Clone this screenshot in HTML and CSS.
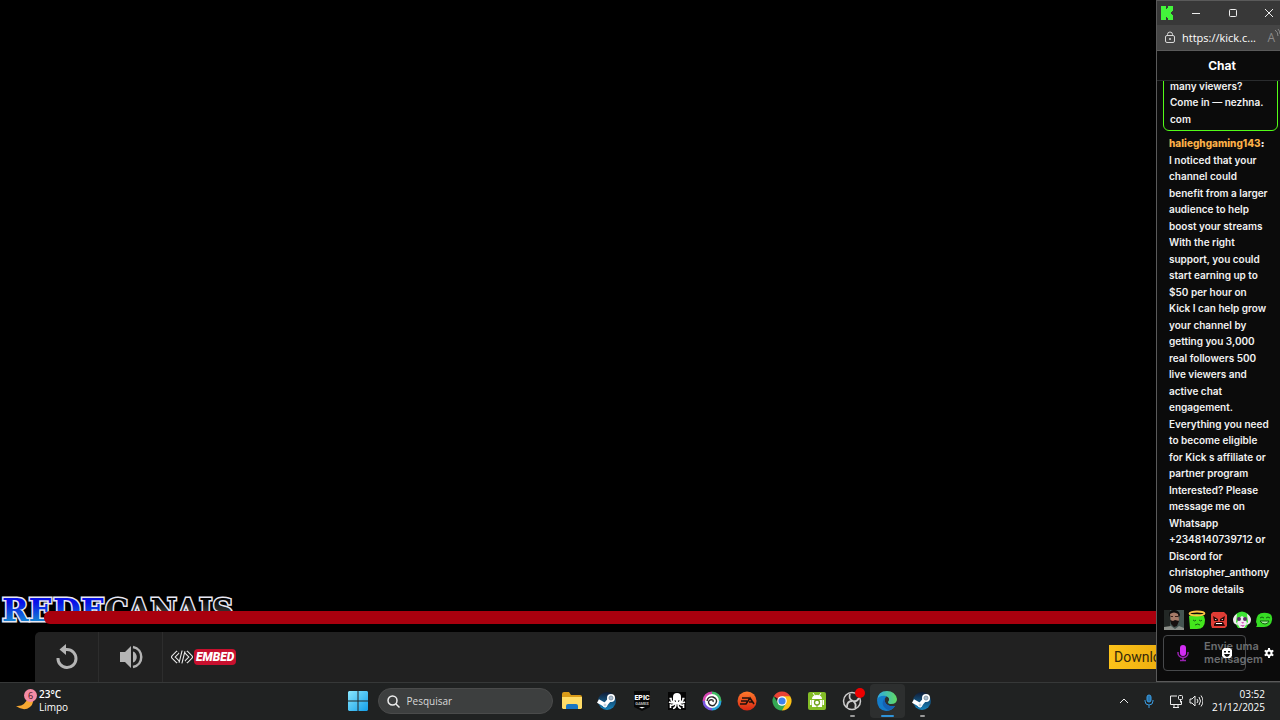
FILE: index.html
```html
<!DOCTYPE html>
<html lang="pt-br">

<head>
    <meta charset="UTF-8">
    <meta name="viewport" content="width=device-width, initial-scale=1.0">
    <title>Rede Canais</title>
    <link rel="stylesheet" href="styles.css">
</head>

<body>
    <div class="desktop">
        <!-- Player -->
        <main class="player">
            <div class="video"></div>
            <div class="seek-row">
                <svg class="logo" width="236" height="32" role="img" aria-label="REDECANAIS">
                    <defs>
                        <linearGradient id="azul" x1="0" y1="0" x2="0" y2="1">
                            <stop offset="0.3" stop-color="#0710e8" />
                            <stop offset="0.85" stop-color="#1590d0" />
                        </linearGradient>
                        <linearGradient id="cinza" x1="0" y1="0" x2="0" y2="1">
                            <stop offset="0.2" stop-color="#000000" />
                            <stop offset="0.8" stop-color="#5a5a5a" />
                        </linearGradient>
                    </defs>
                    <text class="logo-text" x="2" y="27"><tspan class="logo-rede" fill="url(#azul)">REDE</tspan><tspan fill="url(#cinza)">CANAIS</tspan></text>
                </svg>
                <input class="seek" type="range" min="0" max="100" value="0" aria-label="Progresso">
            </div>
            <div class="controls">
                <button class="control" aria-label="Reiniciar">
                    <svg width="24" height="26" viewBox="0 0 24 26" fill="none" stroke="#b4b4b4" stroke-width="3">
                        <path d="M3 14a9 9 0 1 0 9-8.500H9" />
                        <path d="M11 0v11L4.500 5.500z" fill="#b4b4b4" stroke="none" />
                    </svg>
                </button>
                <button class="control" aria-label="Volume">
                    <svg width="24" height="24" viewBox="0 0 24 24" fill="#b4b4b4">
                        <path d="M1 7h5l6-6v22l-6-6H1z" />
                        <path d="M14 6.500c5 1.500 5 9.500 0 11z" />
                        <path d="M14 2c11 2 11 18 0 20" fill="none" stroke="#b4b4b4" stroke-width="2.500" />
                    </svg>
                </button>
                <button class="embed">
                    <svg width="22" height="16" viewBox="0 0 22 16" fill="none" stroke-linejoin="round">
                        <path d="M7 3L2 8l5 5M15 3l5 5-5 5M12.500 2l-3 12" stroke="#e8e8e8" stroke-width="4" />
                        <path d="M7 3L2 8l5 5M15 3l5 5-5 5M12.500 2l-3 12" stroke="#191919" stroke-width="1.800" />
                    </svg>
                    <span class="embed-label">EMBED</span>
                </button>
                <a class="download" href="#">Download</a>
            </div>
        </main>

        <!-- Janela do chat -->
        <aside class="chat-window">
            <div class="titlebar">
                <svg width="12" height="14" viewBox="0 0 12 14" fill="#43f53b">
                    <path d="M0 0h5v3h1V2h1V0h5v5h-1v1h-1v2h1v1h1v5H7v-2H6v-1H5v3H0z" />
                </svg>
                <button aria-label="Minimizar"><svg width="10" height="10" stroke="#eee"><path d="M1 5.500h8" /></svg></button>
                <button aria-label="Maximizar"><svg width="10" height="10" fill="none" stroke="#eee"><rect x="1.500" y="1.500" width="7" height="7" rx="1" /></svg></button>
                <button aria-label="Fechar"><svg width="10" height="10" stroke="#eee"><path d="M1 1l8 8M9 1L1 9" /></svg></button>
            </div>
            <div class="addressbar">
                <svg width="12" height="13" viewBox="0 0 12 13" fill="none" stroke="#d8d8d8">
                    <rect x="1.500" y="4.500" width="9" height="7" rx="1.500" />
                    <path d="M3.500 4.500V3.500a2.500 2.500 0 0 1 5 0v1" />
                    <circle cx="6" cy="8" r="0.600" fill="#d8d8d8" />
                </svg>
                <span class="url">https://kick.c...</span>
                <button class="read-aloud" aria-label="Ler em voz alta">A
                    <svg width="5" height="8" fill="none" stroke="#8a8a8a"><path d="M0 1q3 2 3 6M3 0q2 2 2 5" /></svg>
                </button>
            </div>
            <h1 class="chat-title">Chat</h1>
            <div class="messages">
                <p class="pinned">many viewers?<br>Come in — nezhna.<br>com</p>
                <p class="message"><a class="user" href="#">halieghgaming143</a><b>:</b><br>
                    I noticed that your channel could benefit from a larger audience to help boost your streams<br>
                    With the right support, you could start earning up to $50 per hour on<br>
                    Kick I can help grow your channel by<br>
                    getting you 3,000 real followers 500 live viewers and active chat engagement.<br>
                    Everything you need to become eligible for Kick s affiliate or partner program<br>
                    Interested? Please message me on Whatsapp<br>
                    +2348140739712 or Discord for christopher_anthony<wbr>06 more details</p>
            </div>
            <div class="emotes">
                <button aria-label="Emote barba">
                    <svg width="20" height="20" viewBox="0 0 20 20">
                        <path fill="#455552" d="M0 0h20v20H0z" />
                        <path fill="#222725" d="M0 0h6v20H0z" />
                        <path fill="#0d0d0d" d="M5 5q0-5 5-5t6 5l-1 2H6z" />
                        <path fill="#a67b68" d="M6 4q4-3 8 0l1 6-4 5-4-4z" />
                        <path fill="#16100f" d="M6 10l3 1 2-1 4 1-2 5-3 1-3-3z" />
                        <path stroke="#382019" d="M7 6.500h2M11 6.500h3" />
                        <path fill="#8d918b" d="M0 17l7-1 4 3 4-3 5 2v2H0z" />
                    </svg>
                </button>
                <button aria-label="Emote anjo">
                    <svg width="20" height="20" viewBox="0 0 20 20">
                        <path fill="#43e51c" d="M2 6q8-4 15 0l1 4q0 9-8 9H3z" />
                        <ellipse cx="10" cy="3.500" rx="7.500" ry="2" fill="none" stroke="#ffc545" stroke-width="1.800" />
                        <path fill="none" stroke="#146410" d="M6 10q2 2 3 0M12 10q2 2 3 0M8 15q3-2 5 0" />
                    </svg>
                </button>
                <button aria-label="Emote bravo">
                    <svg width="20" height="20" viewBox="0 0 20 20">
                        <path fill="#df3c35" d="M4 2h11l3 3v11l-2 2H3l-1-3V4z" />
                        <path fill="#2b0808" d="M4 6l5 3v2H5zM16 6l-5 3v2h4zM5 14l2-2h7l2 4H5z" />
                        <path fill="#fff" d="M6 9l2 1H6zM14 9l-2 1h2zM7 13h6v1H7z" />
                    </svg>
                </button>
                <button aria-label="Emote cachorro">
                    <svg width="20" height="20" viewBox="0 0 20 20">
                        <path fill="#3ee336" d="M4 4q6-5 12 0l2 7-4 7H6l-4-7z" />
                        <path fill="#f2e9f2" d="M1 9q1-4 4-5l-1 8 2 3-3-1q-2-1-2-5zM19 9q-1-4-4-5l1 8-2 3 3-1q2-1 2-5zM7 8l3-2 3 2 2 5-3 5H8l-3-5z" />
                        <circle cx="7" cy="9" r="2" fill="#5b2b69" /><circle cx="13" cy="9" r="2" fill="#5b2b69" />
                        <path fill="#d45aba" d="M9 12h3l-1 2zM8 15h5l-2 2z" />
                    </svg>
                </button>
                <button aria-label="Emote feliz">
                    <svg width="20" height="20" viewBox="0 0 20 20">
                        <path fill="#36dc24" d="M4 5q3-3 9-2 6 1 5 7-1 7-8 7H2q2-2 0-5 0-4 2-7z" />
                        <path fill="none" stroke="#12600e" d="M6 8q2-2 4 0M12 8q2-2 4 0" />
                        <path fill="#a5f09d" stroke="#12600e" d="M6 11h9q-1 3-4 3t-5-3z" />
                    </svg>
                </button>
            </div>
            <div class="composer">
                <div class="message-box">
                    <svg class="mic" width="12" height="18" viewBox="0 0 12 18">
                        <rect x="3" y="1" width="6" height="11" rx="3" fill="#d12cf2" />
                        <path d="M1 8v1a5 4.500 0 0 0 10 0V8M6 13v4M3 16.500h6" fill="none" stroke="#9822b0" stroke-width="1.500" />
                    </svg>
                    <textarea rows="2" aria-label="Mensagem" placeholder="Envie uma mensagem"></textarea>
                    <button class="smiley" aria-label="Emotes">
                        <svg width="12" height="12" viewBox="0 0 12 12">
                            <path fill="#fff" d="M3 1h6l2 2v6l-2 2H3L1 9V3z" />
                            <path fill="#111" d="M3 4h2v1.500H3zM7 4h2v1.500H7zM3 7h6q-1 3-3 3T3 7z" />
                        </svg>
                    </button>
                </div>
                <button class="settings" aria-label="Configurações">
                    <svg width="10" height="10" viewBox="0 0 10 10">
                        <circle cx="5" cy="5" r="2.500" fill="none" stroke="#fff" stroke-width="2" />
                        <path d="M5 0v2M5 8v2M0.700 2.500l1.700 1M7.600 6.500l1.700 1M9.300 2.500l-1.700 1M2.400 6.500l-1.700 1" stroke="#fff" stroke-width="2" />
                    </svg>
                </button>
            </div>
        </aside>
    </div>

    <!-- Barra de tarefas -->
    <footer class="taskbar">
        <button class="weather">
            <svg width="24" height="26" viewBox="0 0 24 26">
                <path d="M17 8q3 7-2 11-6 5-14-1 9 1 12-9z" fill="#f7a832" />
                <circle cx="15.500" cy="7.500" r="6.500" fill="#f58ba6" />
                <text class="badge" x="15.500" y="11" text-anchor="middle">6</text>
            </svg>
            <span><b>23°C</b><br>Limpo</span>
        </button>
        <nav class="apps">
            <button class="app" aria-label="Iniciar">
                <svg width="20" height="20" viewBox="0 0 20 20">
                    <defs><linearGradient id="win" x1="0" y1="0" x2="1" y2="1"><stop stop-color="#8ae8ff" /><stop offset="1" stop-color="#129ee8" /></linearGradient></defs>
                    <path fill="url(#win)" d="M1 0h8.500v9.500H0V1zM10.500 0H19l1 1v8.500h-9.500zM0 10.500h9.500V20H1l-1-1zM10.500 10.500H20V19l-1 1h-8.500z" />
                </svg>
            </button>
            <label class="search">
                <svg width="13" height="13" viewBox="0 0 13 13" fill="none" stroke="#eee" stroke-width="1.500"><circle cx="5.500" cy="5.500" r="4.500" /><path d="M9 9l3.500 3.500" /></svg>
                <input type="text" placeholder="Pesquisar" aria-label="Pesquisar">
            </label>
            <button class="app" aria-label="Explorador de Arquivos">
                <svg width="20" height="20" viewBox="0 0 20 20">
                    <path fill="#d99b18" d="M0 3q0-2 2-2h5l2 3h9q2 0 2 2v5H0z" />
                    <path fill="#ffdc67" d="M0 6h20v11l-1 1H1l-1-1z" />
                    <path fill="#1976c4" d="M4 18v-3q0-2 2-2h8q2 0 2 2v3z" />
                </svg>
            </button>
            <button class="app" aria-label="Steam">
                <svg width="20" height="20" viewBox="0 0 20 20">
                    <defs><linearGradient id="steam" x1="0" y1="0" x2="0" y2="1"><stop stop-color="#101b35" /><stop offset="1" stop-color="#1784bd" /></linearGradient></defs>
                    <circle cx="10" cy="10" r="9" fill="url(#steam)" />
                    <path d="M1 10l7 4 6-7" fill="none" stroke="#fff" stroke-width="4" />
                    <circle cx="14" cy="7" r="4" fill="#fff" /><circle cx="14" cy="7" r="2" fill="#a9bed0" stroke="#8496a6" />
                    <circle cx="8" cy="14" r="2" fill="#c4d2dd" stroke="#fff" />
                </svg>
            </button>
            <button class="app" aria-label="Epic Games">
                <svg width="18" height="20" viewBox="0 0 18 20">
                    <path fill="#080808" d="M1 0h16v16l-8 4-8-4z" />
                    <text class="epic" x="9" y="9" text-anchor="middle">EPIC</text>
                    <text class="epic-small" x="9" y="14" text-anchor="middle">GAMES</text>
                    <path d="M6 16l3 1.500 3-1.500" fill="#fff" />
                </svg>
            </button>
            <button class="app" aria-label="Polvo">
                <svg width="18" height="18" viewBox="0 0 18 18">
                    <path fill="#050505" d="M0 0h18v18H0z" />
                    <path fill="#fff" d="M5 5q0-4 4-4t4 4v4l-1 3H6L5 9z" />
                    <path d="M6 10Q3 10 3 6.500H1.500M6 11Q3 11 1 10M7 11.500Q5 14 2.500 13v3M8 12q0 4-3 4.500M12 10q3 0 3-3.500h1.500M12 11q3 0 5-1M11 11.500q2 2.500 4.500 1.500v3M10 12q0 4 3 4.500" fill="none" stroke="#fff" stroke-width="1.600" />
                    <path fill="#050505" d="M6.500 8l1.500.8v1H7zM11.500 8l-1.500.8v1h1z" />
                </svg>
            </button>
            <button class="app" aria-label="Ubisoft Connect">
                <svg width="20" height="20" viewBox="0 0 20 20">
                    <path d="M2 10a8 8 0 0 1 8-8" fill="none" stroke="#d946b4" stroke-width="3" />
                    <path d="M10 2a8 8 0 0 1 8 8" fill="none" stroke="#41b964" stroke-width="3" />
                    <path d="M18 10a8 8 0 0 1-8 8" fill="none" stroke="#27a4d7" stroke-width="3" />
                    <path d="M10 18a8 8 0 0 1-8-8" fill="none" stroke="#7755df" stroke-width="3" />
                    <circle cx="10" cy="10" r="7" fill="#fff" />
                    <path d="M5 10q1-5 6-4 5 2 3 6-2 4-6 2-3-3 0-5 4-1 3 2" fill="none" stroke="#292929" stroke-width="1.400" />
                </svg>
            </button>
            <button class="app" aria-label="EA">
                <svg width="20" height="20" viewBox="0 0 20 20">
                    <defs><linearGradient id="ea" x1="0" y1="0" x2="0" y2="1"><stop stop-color="#ff7a2c" /><stop offset="1" stop-color="#d82713" /></linearGradient></defs>
                    <circle cx="10" cy="10" r="9.500" fill="url(#ea)" />
                    <path d="M5 7h7M4 10h6M3 13h6l4-6 4 6M12 11h4" fill="none" stroke="#21100c" stroke-width="1.600" />
                </svg>
            </button>
            <button class="app" aria-label="Chrome">
                <svg width="20" height="20" viewBox="0 0 20 20">
                    <path fill="#e94335" d="M10 10L1.770 5.250A9.500 9.500 0 0 1 18.230 5.250z" />
                    <path fill="#fbc116" d="M10 10V5.250h8.230A9.500 9.500 0 0 1 10 19.500z" />
                    <path fill="#34a853" d="M10 10l4 2.400L10 19.500A9.500 9.500 0 0 1 1.770 5.250L6 12z" />
                    <circle cx="10" cy="10" r="4.800" fill="#fff" /><circle cx="10" cy="10" r="3.600" fill="#3d82ee" />
                </svg>
            </button>
            <button class="app" aria-label="Emulador Android">
                <svg width="20" height="20" viewBox="0 0 20 20">
                    <rect x="1" y="1" width="18" height="18" rx="2" fill="#83bd27" />
                    <path fill="#fff" d="M5 8q0-4 5-4t5 4zM5 9h10v7H5zM3 9h1.500v5H3zM15.500 9H17v5h-1.500z" />
                    <path d="M6 2l2 3M14 2l-2 3" stroke="#fff" />
                    <circle cx="10" cy="11.500" r="2.500" fill="none" stroke="#70a31d" stroke-width="1.300" /><path d="M10 14v3" stroke="#70a31d" />
                </svg>
            </button>
            <button class="app open" aria-label="OBS Studio">
                <svg width="20" height="20" viewBox="0 0 20 20">
                    <circle cx="10" cy="10" r="8.500" fill="#252525" stroke="#ccc" stroke-width="1.500" />
                    <path d="M8 3q-2 5 3 7 4 1 6-3M10 10q-5 0-5 6M11 10q4 3 2 7" fill="none" stroke="#ccc" stroke-width="1.800" />
                </svg>
                <span class="rec"></span>
            </button>
            <button class="app open active" aria-label="Microsoft Edge">
                <svg width="20" height="20" viewBox="0 0 20 20">
                    <defs><linearGradient id="edge"><stop stop-color="#2aa8ea" /><stop offset="1" stop-color="#62db63" /></linearGradient></defs>
                    <path fill="#147cca" d="M0 9q2-7 10-4-3 2-2 6 2 5 10 4-3 5-9 5Q0 19 0 9z" />
                    <path fill="url(#edge)" d="M0 9Q1 0 10 0q8 0 10 8 0 5-6 5-3 0-3-2 3-4-2-6-7-1-9 4z" />
                    <path fill="#1561b4" d="M8 7q-6 7 3 12 5 0 7-4-8 1-10-4z" />
                </svg>
            </button>
            <button class="app open" aria-label="Steam aberto">
                <svg width="20" height="20" viewBox="0 0 20 20">
                    <circle cx="10" cy="10" r="9" fill="url(#steam)" />
                    <path d="M1 10l7 4 6-7" fill="none" stroke="#fff" stroke-width="4" />
                    <circle cx="14" cy="7" r="4" fill="#fff" /><circle cx="14" cy="7" r="2" fill="#a9bed0" stroke="#8496a6" />
                    <circle cx="8" cy="14" r="2" fill="#c4d2dd" stroke="#fff" />
                </svg>
            </button>
        </nav>
        <div class="tray">
            <button aria-label="Ícones ocultos"><svg width="10" height="10" fill="none" stroke="#eee"><path d="M1 7l4-4 4 4" /></svg></button>
            <button aria-label="Microfone">
                <svg width="10" height="14" viewBox="0 0 10 14" fill="none" stroke="#3a9be0"><rect x="3" y="1" width="4" height="7" rx="2" fill="#2876b0" /><path d="M1 6v1a4 4 0 0 0 8 0V6M5 11v3" /></svg>
            </button>
            <button class="status" aria-label="Rede e volume">
                <svg width="14" height="14" viewBox="0 0 14 14" fill="none" stroke="#eee"><path d="M8 2H1.500v8.500h11V7M5 10.500v2.500M9 10.500v2.500M4 13.500h6" /><rect x="9.500" y="1.500" width="4" height="4" rx="1" /><path d="M11.500 5.500v3" /></svg>
                <svg width="14" height="14" viewBox="0 0 14 14" fill="none" stroke="#eee"><path d="M1 5h2l3-3v10L3 9H1zM8 5q2 2 0 4M10 3q3 4 0 8M12 1.500q4 5.500 0 11" /></svg>
            </button>
            <time class="clock" datetime="2025-12-21T03:52">03:52<br>21/12/2025</time>
        </div>
    </footer>
</body>

</html>
```
FILE: styles.css
```css
* {
    box-sizing: border-box;
}

body {
    margin: 0;
    height: 100vh;
    display: flex;
    flex-direction: column;
    overflow: hidden;
    background-color: #000000;
    color: #ffffff;
    font-family: "Open Sans", "Noto Sans", sans-serif;
    font-size: 11px;
}

button {
    margin: 0;
    padding: 0;
    border: 0;
    background: none;
    color: inherit;
    font: inherit;
    cursor: pointer;
}

svg {
    display: block;
    flex-shrink: 0;
}

.desktop {
    flex: 1;
    min-height: 0;
    display: flex;
}

/* Player */
.player {
    flex: 1;
    min-width: 0;
    display: flex;
    flex-direction: column;
    overflow: hidden;
}

.video {
    flex: 1;
}

.seek-row {
    position: relative;
    padding-bottom: 6px;
}

.logo-text {
    font-family: "DejaVu Serif Condensed", "DejaVu Serif", serif;
    font-size: 32px;
    font-weight: bold;
    stroke: #e8e8f4;
    stroke-width: 3px;
    paint-order: stroke;
}

.logo-rede {
    font-family: "DejaVu Serif", serif;
}

.seek {
    position: absolute;
    left: 44px;
    bottom: 8px;
    width: calc(100% - 44px);
    height: 13px;
    margin: 0;
    appearance: none;
    background-color: #a9000e;
    border-radius: 6px 0 0 6px;
}

.seek::-webkit-slider-thumb {
    appearance: none;
    width: 0;
    height: 0;
}

.controls {
    height: 50px;
    margin-left: 35px;
    display: flex;
    align-items: center;
    background-color: #212121;
    border-radius: 5px 0 0 0;
}

.control {
    width: 64px;
    height: 50px;
    display: flex;
    align-items: center;
    justify-content: center;
    border-right: 1px solid #2d2d2d;
}

.embed {
    display: flex;
    align-items: center;
    gap: 1px;
    margin-left: 8px;
}

.embed-label {
    padding: 0 2px;
    border-radius: 4px;
    background-color: #c8102e;
    font-family: Roboto, sans-serif;
    font-size: 12px;
    font-style: italic;
    font-weight: 900;
    line-height: 16px;
}

.download {
    width: 47px;
    margin-left: auto;
    padding-left: 5px;
    overflow: hidden;
    background: linear-gradient(to right, #fcc21a, #eeb010);
    color: #33270a;
    font-family: "Liberation Sans Narrow", Roboto, sans-serif;
    font-size: 14px;
    line-height: 24px;
    text-decoration: none;
}

/* Chat */
.chat-window {
    width: 124px;
    display: flex;
    flex-direction: column;
    border-left: 1px solid #5a5a5a;
    border-bottom: 1px solid #5a5a5a;
    background-color: #0b0b0b;
    font-family: Inter, sans-serif;
}

.titlebar {
    height: 25px;
    display: flex;
    align-items: center;
    justify-content: space-between;
    padding: 0 6px 0 4px;
    border-top: 1px solid #5a5a5a;
    background-color: #383838;
}

.titlebar button:nth-of-type(1) {
    margin-left: -8px;
}

.addressbar {
    height: 26px;
    display: flex;
    align-items: center;
    padding-left: 7px;
    overflow: hidden;
    background-color: #454545;
    border-bottom: 1px solid #5a5a5a;
    font-family: "Open Sans", sans-serif;
    white-space: nowrap;
}

.url {
    margin-left: 6px;
}

.read-aloud {
    display: flex;
    margin-left: auto;
    color: #8a8a8a;
    font-size: 12px;
}

.chat-title {
    margin: 0;
    padding-left: 7px;
    border-bottom: 1px solid #2a2c2e;
    font-size: 12px;
    font-weight: 700;
    line-height: 29px;
    text-align: center;
}

.messages {
    flex: 1;
    min-height: 0;
    display: flex;
    flex-direction: column;
    justify-content: flex-end;
    overflow: hidden;
    padding: 0 2px 13px 6px;
    color: #f2f2f2;
    font-size: 10px;
    font-weight: 600;
    line-height: 1.65;
}

.pinned {
    margin: 0 0 4px;
    padding: 4px 6px 3px;
    border: 1px solid #53fc18;
    border-radius: 6px;
}

.message {
    margin: 0;
    padding: 0 7px 0 6px;
}

.user {
    color: #fbb048;
    font-weight: 800;
    text-decoration: none;
}

.emotes {
    display: flex;
    justify-content: space-between;
    padding: 0 6px 0 7px;
}

.composer {
    display: flex;
    align-items: center;
    justify-content: space-between;
    padding: 5px 6px 10px;
}

.message-box {
    position: relative;
    width: 83px;
    height: 36px;
    display: flex;
    align-items: center;
    border: 1px solid #47494b;
    border-radius: 4px;
}

.mic {
    margin-left: 13px;
}

.message-box textarea {
    width: 64px;
    height: 26px;
    flex-shrink: 0;
    margin: 0 0 0 15px;
    padding: 0;
    border: 0;
    background: none;
    color: #ffffff;
    font-family: inherit;
    font-size: 11px;
    font-weight: 600;
    line-height: 13px;
    resize: none;
    overflow: hidden;
}

.message-box textarea::placeholder {
    color: #6c6e70;
}

.smiley {
    position: absolute;
    right: 12px;
    top: 11px;
}

/* Barra de tarefas */
.taskbar {
    height: 38px;
    display: grid;
    grid-template-columns: 1fr auto 1fr;
    align-items: center;
    padding-bottom: 1px;
    border-top: 1px solid #363838;
    background-color: #202222;
}

.weather {
    justify-self: start;
    display: flex;
    align-items: center;
    padding-left: 15px;
    font-size: 10px;
    line-height: 13px;
    text-align: left;
}

.weather b {
    font-weight: 600;
}

.badge {
    font-size: 9px;
    fill: #3c1720;
}

.apps {
    display: flex;
    align-items: center;
}

.app {
    position: relative;
    width: 35px;
    height: 34px;
    display: flex;
    align-items: center;
    justify-content: center;
}

.search {
    width: 175px;
    height: 26px;
    display: flex;
    align-items: center;
    gap: 7px;
    margin: 0 2px;
    padding: 0 8px;
    border: 1px solid #4a4b4b;
    border-radius: 13px;
    background-color: #3d3f3f;
}

.search input {
    flex: 1;
    min-width: 0;
    padding: 0;
    border: 0;
    background: none;
    color: #ffffff;
    font-family: inherit;
    font-size: 10px;
}

.search input::placeholder {
    color: #d8d8d8;
}

.epic {
    fill: #ffffff;
    font-family: Roboto, sans-serif;
    font-size: 7px;
    font-weight: 900;
}

.epic-small {
    fill: #bbbbbb;
    font-family: Roboto, sans-serif;
    font-size: 4px;
    font-weight: 700;
}

.open::after {
    content: "";
    position: absolute;
    bottom: 1px;
    width: 5px;
    height: 2px;
    border-radius: 1px;
    background-color: #999999;
}

.active {
    border-radius: 4px;
    background-color: #2d2f2f;
}

.active::after {
    width: 13px;
    background-color: #2f93d8;
}

.rec {
    position: absolute;
    top: 4px;
    right: 5px;
    width: 10px;
    height: 10px;
    border-radius: 50%;
    background-color: #ee0000;
}

.tray {
    justify-self: end;
    display: flex;
    align-items: center;
    gap: 15px;
    padding-right: 15px;
    font-size: 10px;
}

.status {
    display: flex;
    gap: 6px;
}

.clock {
    margin-left: -6px;
    line-height: 13px;
    text-align: right;
}
```
